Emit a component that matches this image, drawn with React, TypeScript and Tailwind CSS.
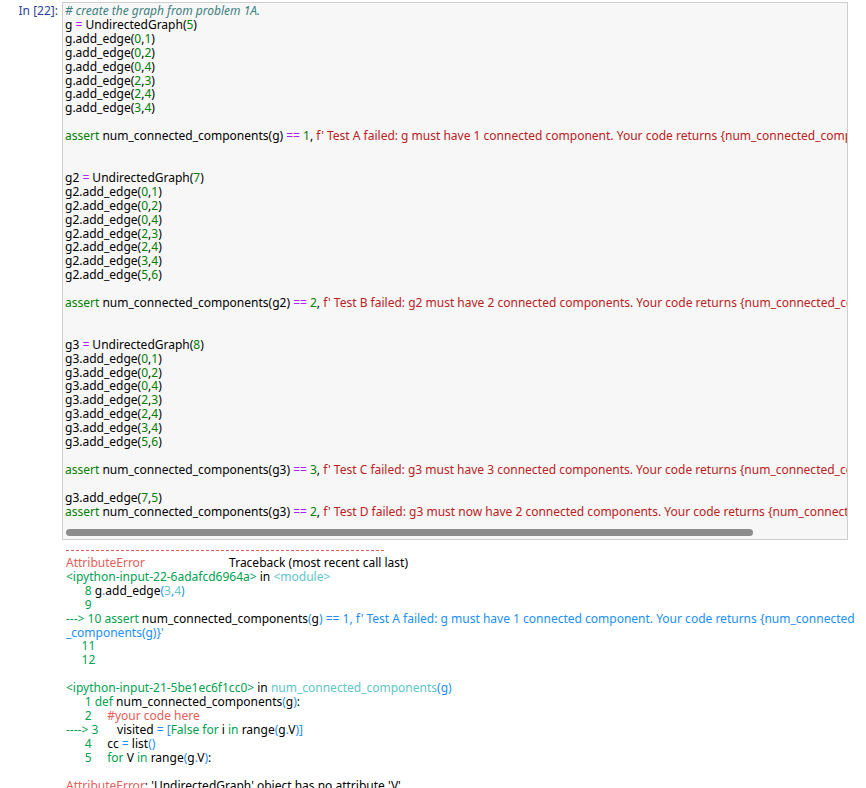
import React from "react";

const G = ({ c }: { c: string }) => <span className="text-[#008000]">{c}</span>;
const P = ({ c }: { c: string }) => <span className="text-[#aa22ff]">{c}</span>;
const R = ({ c }: { c: string }) => <span className="text-[#ba2121]">{c}</span>;

const edge = (v: string, a: string, b: string) => (
  <div>{v}.add_edge(<G c={a} />,<G c={b} />)</div>
);
const Blank = () => <div>&nbsp;</div>;

const OG = ({ c }: { c: string }) => <span className="text-[#00a250]">{c}</span>;
const OR = ({ c }: { c: string }) => <span className="text-[#e75c58]">{c}</span>;
const OC = ({ c }: { c: string }) => <span className="text-[#60c6c8]">{c}</span>;
const OB = ({ c }: { c: string }) => <span className="text-[#208ffb]">{c}</span>;

export default function App() {
  return (
    <div className="w-[866px] h-[788px] bg-white overflow-hidden text-[12px] leading-[13.9px] text-black" style={{ fontFamily: "'Noto Sans', sans-serif" }}>
      <div className="flex pt-[2px]">
        <div className="w-[62px] text-right pr-[4px] pt-[2px] text-[#303f9f]">In [22]:</div>
        <div className="w-[786px] h-[538px] bg-[#f7f7f7] border border-[#cfcfcf] overflow-hidden flex flex-col">
          <div className="pl-[2px] pt-[1px] whitespace-pre flex-1">
            <div className="italic text-[#408080]"># create the graph from problem 1A.</div>
            <div>g <P c="=" /> UndirectedGraph(<G c="5" />)</div>
            {edge("g", "0", "1")}{edge("g", "0", "2")}{edge("g", "0", "4")}{edge("g", "2", "3")}{edge("g", "2", "4")}{edge("g", "3", "4")}
            <Blank />
            <div><G c="assert" /> num_connected_components(g) <P c="==" /> <G c="1" />, <R c="f' Test A failed: g must have 1 connected component. Your code returns {num_connected_components(g)}'" /></div>
            <Blank /><Blank />
            <div>g2 <P c="=" /> UndirectedGraph(<G c="7" />)</div>
            {edge("g2", "0", "1")}{edge("g2", "0", "2")}{edge("g2", "0", "4")}{edge("g2", "2", "3")}{edge("g2", "2", "4")}{edge("g2", "3", "4")}{edge("g2", "5", "6")}
            <Blank />
            <div><G c="assert" /> num_connected_components(g2) <P c="==" /> <G c="2" />, <R c="f' Test B failed: g2 must have 2 connected components. Your code returns {num_connected_components(g2)}'" /></div>
            <Blank /><Blank />
            <div>g3 <P c="=" /> UndirectedGraph(<G c="8" />)</div>
            {edge("g3", "0", "1")}{edge("g3", "0", "2")}{edge("g3", "0", "4")}{edge("g3", "2", "3")}{edge("g3", "2", "4")}{edge("g3", "3", "4")}{edge("g3", "5", "6")}
            <Blank />
            <div><G c="assert" /> num_connected_components(g3) <P c="==" /> <G c="3" />, <R c="f' Test C failed: g3 must have 3 connected components. Your code returns {num_connected_components(g3)}'" /></div>
            <Blank />
            {edge("g3", "7", "5")}
            <div><G c="assert" /> num_connected_components(g3) <P c="==" /> <G c="2" />, <R c="f' Test D failed: g3 must now have 2 connected components. Your code returns {num_connected_components(g3)}'" /></div>
          </div>
          <div className="h-[14px] px-[3px] flex items-center">
            <div className="w-[687px] h-[7px] rounded-full bg-[#8c8c8c]" />
          </div>
        </div>
      </div>
      <div className="pl-[66px] pt-[10px] whitespace-pre">
        <div className="w-[318px] border-t border-dashed border-[#e75c58] mb-[5px]" />
        <div><OR c="AttributeError" />{"                           "}Traceback (most recent call last)</div>
        <div><OG c="<ipython-input-22-6adafcd6964a>" /> in <OC c="<module>" /></div>
        <div><OG c="      8" /> g<OB c="." />add_edge<OB c="(" /><OC c="3" /><OB c="," /><OC c="4" /><OB c=")" /></div>
        <div><OG c="      9" /></div>
        <div><OG c="---> 10" /> <OG c="assert" /> num_connected_components<OB c="(" />g<OB c=")" /> <OB c="==" /> <OB c="1" /><OB c="," /> <OB c="f' Test A failed: g must have 1 connected component. Your code returns {num_connected" /></div>
        <div><OB c="_components(g)}'" /></div>
        <div><OG c="     11" /></div>
        <div><OG c="     12" /></div>
        <Blank />
        <div><OG c="<ipython-input-21-5be1ec6f1cc0>" /> in <OC c="num_connected_components" /><OB c="(g)" /></div>
        <div><OG c="      1 def" /> num_connected_components<OB c="(" />g<OB c=")" />:</div>
        <div><OG c="      2" />     <OR c="#your code here" /></div>
        <div><OG c="----> 3" />      visited <OB c="=" /> <OB c="[" /><OG c="False for" /> i <OG c="in" /> range<OB c="(" />g<OB c="." />V<OB c=")]" /></div>
        <div><OG c="      4" />     cc <OB c="=" /> list<OB c="()" /></div>
        <div><OG c="      5" />     <OG c="for" /> V <OG c="in" /> range<OB c="(" />g<OB c="." />V<OB c=")" />:</div>
        <Blank />
        <div><OR c="AttributeError" />: 'UndirectedGraph' object has no attribute 'V'</div>
      </div>
    </div>
  );
}
